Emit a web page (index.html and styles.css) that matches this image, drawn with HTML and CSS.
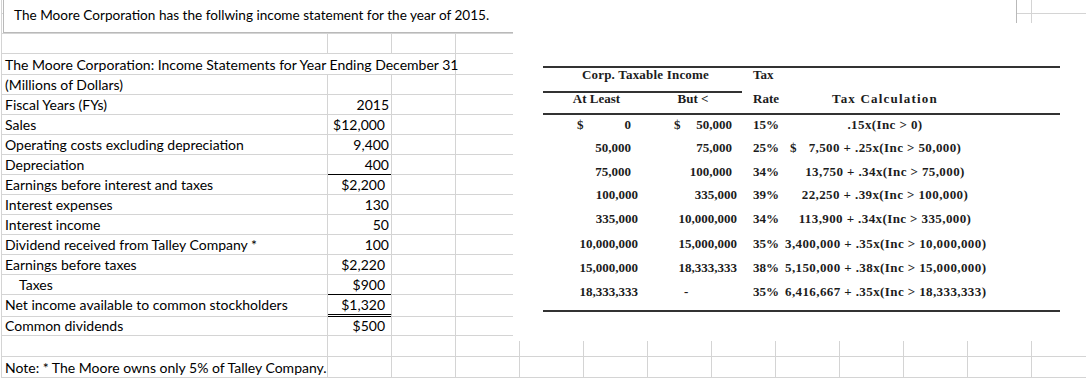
FILE: index.html
```html
<!DOCTYPE html>
<html>
<head>
<meta charset="utf-8">
<title>Income statement</title>
<link rel="stylesheet" href="styles.css">
</head>
<body>
<div class="sheet">
  <div class="grid">
    <div class="row row--short"><div class="c a"></div><div class="c b"></div><div class="c cc"></div><div class="rest"></div></div>
    <div class="row"><div class="c a"></div><div class="c b"></div><div class="c cc"></div><div class="rest"></div></div>
    <div class="row"><div class="c a"></div><div class="c b"></div><div class="c cc"></div><div class="rest"></div></div>
    <div class="row"><div class="c a a--wide">The Moore Corporation: Income Statements for Year Ending December 31</div><div class="rest"></div></div>
    <div class="row"><div class="c a">(Millions of Dollars)</div><div class="c b"></div><div class="c cc"></div><div class="rest"></div></div>
    <div class="row"><div class="c a">Fiscal Years (FYs)</div><div class="c b">2015</div><div class="c cc"></div><div class="rest"></div></div>
    <div class="row"><div class="c a">Sales</div><div class="c b b--acct">$12,000</div><div class="c cc"></div><div class="rest"></div></div>
    <div class="row"><div class="c a">Operating costs excluding depreciation</div><div class="c b">9,400</div><div class="c cc"></div><div class="rest"></div></div>
    <div class="row"><div class="c a">Depreciation</div><div class="c b b--rule">400</div><div class="c cc"></div><div class="rest"></div></div>
    <div class="row"><div class="c a">Earnings before interest and taxes</div><div class="c b b--acct">$2,200</div><div class="c cc"></div><div class="rest"></div></div>
    <div class="row"><div class="c a">Interest expenses</div><div class="c b">130</div><div class="c cc"></div><div class="rest"></div></div>
    <div class="row"><div class="c a">Interest income</div><div class="c b">50</div><div class="c cc"></div><div class="rest"></div></div>
    <div class="row"><div class="c a">Dividend received from Talley Company *</div><div class="c b">100</div><div class="c cc"></div><div class="rest"></div></div>
    <div class="row"><div class="c a">Earnings before taxes</div><div class="c b b--acct">$2,220</div><div class="c cc"></div><div class="rest"></div></div>
    <div class="row"><div class="c a a--indent">Taxes</div><div class="c b b--acct b--rule">$900</div><div class="c cc"></div><div class="rest"></div></div>
    <div class="row row--tall"><div class="c a">Net income available to common stockholders</div><div class="c b b--acct b--double">$1,320</div><div class="c cc"></div><div class="rest"></div></div>
    <div class="row row--tall"><div class="c a">Common dividends</div><div class="c b b--acct">$500</div><div class="c cc"></div><div class="rest"></div></div>
    <div class="row row--tall"><div class="c a"></div><div class="c b"></div><div class="c cc"></div><div class="rest"></div></div>
    <div class="row"><div class="c a">Note: * The Moore owns only 5% of Talley Company.</div><div class="c b"></div><div class="c cc"></div><div class="rest"></div></div>
    <div class="row"><div class="c a"></div><div class="c b"></div><div class="c cc"></div><div class="rest"></div></div>
  </div>

  <div class="textbox">The Moore Corporation has the follwing income statement for the year of 2015.</div>

  <div class="picture">
    <div class="tax">
      <div class="tax-head1">
        <div class="th th--group">Corp. Taxable Income</div>
        <div class="th th--rate">Tax</div>
      </div>
      <div class="tax-head2">
        <div class="th th--least">At Least</div>
        <div class="th th--but">But &lt;</div>
        <div class="th th--rate">Rate</div>
        <div class="th th--calc">Tax Calculation</div>
      </div>
      <div class="tax-body">
        <div class="tr tr--1">
          <div class="td least"><span class="cur">$</span><span>0</span></div>
          <div class="td but"><span class="cur">$</span><span>50,000</span></div>
          <div class="td rate">15%</div>
          <div class="td calc"><span class="f">.15x(Inc &gt; 0)</span></div>
        </div>
        <div class="tr tr--2">
          <div class="td least"><span>50,000</span></div>
          <div class="td but"><span>75,000</span></div>
          <div class="td rate">25%</div>
          <div class="td calc"><span class="cur">$</span><span class="f">7,500 + .25x(Inc &gt; 50,000)</span></div>
        </div>
        <div class="tr tr--3">
          <div class="td least"><span>75,000</span></div>
          <div class="td but"><span>100,000</span></div>
          <div class="td rate">34%</div>
          <div class="td calc"><span class="f">13,750 + .34x(Inc &gt; 75,000)</span></div>
        </div>
        <div class="tr tr--4 tr--wide">
          <div class="td least"><span>100,000</span></div>
          <div class="td but"><span>335,000</span></div>
          <div class="td rate">39%</div>
          <div class="td calc"><span class="f">22,250 + .39x(Inc &gt; 100,000)</span></div>
        </div>
        <div class="tr tr--5 tr--wide">
          <div class="td least"><span>335,000</span></div>
          <div class="td but"><span>10,000,000</span></div>
          <div class="td rate">34%</div>
          <div class="td calc"><span class="f">113,900 + .34x(Inc &gt; 335,000)</span></div>
        </div>
        <div class="tr tr--6 tr--wide">
          <div class="td least"><span>10,000,000</span></div>
          <div class="td but"><span>15,000,000</span></div>
          <div class="td rate">35%</div>
          <div class="td calc"><span class="f">3,400,000 + .35x(Inc &gt; 10,000,000)</span></div>
        </div>
        <div class="tr tr--7 tr--wide">
          <div class="td least"><span>15,000,000</span></div>
          <div class="td but"><span>18,333,333</span></div>
          <div class="td rate">38%</div>
          <div class="td calc"><span class="f">5,150,000 + .38x(Inc &gt; 15,000,000)</span></div>
        </div>
        <div class="tr tr--8 tr--wide">
          <div class="td least"><span>18,333,333</span></div>
          <div class="td but but--dash"><span>-</span></div>
          <div class="td rate">35%</div>
          <div class="td calc"><span class="f">6,416,667 + .35x(Inc &gt; 18,333,333)</span></div>
        </div>
      </div>
    </div>
  </div>
</div>
</body>
</html>
```

FILE: styles.css
```css
* { box-sizing: border-box; }

html, body {
  margin: 0;
  padding: 0;
  background: #ffffff;
}

.sheet {
  position: relative;
  width: 1086px;
  height: 378px;
  overflow: hidden;
  padding-left: 1px;
  font-family: "Lato", "Liberation Sans", sans-serif;
  font-size: 14px;
  color: #000;
}

.grid {
  border-left: 1px solid #d4d4d4;
}

.row {
  display: grid;
  grid-template-columns: 326px 64px 64px 1fr;
  height: 20px;
}

.row--short { height: 14px; }
.row--tall { height: 21px; }

.c {
  border-right: 1px solid #d4d4d4;
  border-bottom: 1px solid #d4d4d4;
  line-height: 19px;
  padding-top: 1px;
  white-space: nowrap;
  overflow: visible;
}

.a { padding-left: 3px; }
.a--wide { grid-column: 1 / 4; }
.a--indent { padding-left: 17px; }

.b {
  text-align: right;
  padding-right: 2px;
}

.b--acct { padding-right: 6px; }
.b--rule { border-bottom-color: #000; }
.b--double { border-bottom: 3px double #000; }

.rest {
  border-bottom: 1px solid #d4d4d4;
  background: repeating-linear-gradient(to right, transparent 0, transparent 63px, #d4d4d4 63px, #d4d4d4 64px);
}

.textbox {
  position: absolute;
  left: 3px;
  top: -2px;
  width: 1014px;
  height: 35px;
  border: 1px solid #b9b9b9;
  background: #fff;
  padding: 6px 0 0 10px;
  font-size: 13.6px;
  line-height: 20px;
  white-space: nowrap;
}

.picture {
  position: absolute;
  left: 513px;
  top: 23px;
  width: 573px;
  height: 318px;
  background: #fff;
}

.tax {
  margin: 43px 0 0 30px;
  width: 517px;
  font-family: "Liberation Serif", "Times New Roman", serif;
  font-weight: bold;
  font-size: 13px;
  color: #1c1c1c;
  border-top: 2px solid #333;
}

.tax-head1,
.tax-head2,
.tr {
  display: grid;
  grid-template-columns: 97px 102px 43px 200px 75px;
}

.tax-head1 {
  height: 25px;
}

.th {
  white-space: nowrap;
}

.tax-head1 .th {
  line-height: 14px;
}

.th--group {
  grid-column: 1 / 3;
  text-align: center;
  padding-left: 6px;
  letter-spacing: 0.2px;
  border-bottom: 2px solid #333;
}

.th--rate { padding-left: 11px; }

.tax-head2 {
  height: 22px;
  border-bottom: 2px solid #333;
}

.tax-head2 .th {
  line-height: 12px;
}

.th--least { text-align: center; padding-left: 10px; }
.th--but { text-align: center; padding-left: 4px; }
.th--calc { text-align: center; letter-spacing: 1.2px; }

.tax-body {
  border-bottom: 2px solid #333;
}

.tr {
  line-height: 20px;
  white-space: nowrap;
}

.tr--1 { height: 23px; }
.tr--2 { height: 24px; }
.tr--3 { height: 23px; }
.tr--4 { height: 24px; }
.tr--5 { height: 25px; }
.tr--6 { height: 24px; }
.tr--7 { height: 24px; }
.tr--8 { height: 28px; }

.td {
  display: flex;
  justify-content: flex-end;
  align-items: flex-start;
}

.least { padding: 0 9px 0 34px; }
.but { padding: 0 10px 0 34px; }

.tr--wide .least { padding-right: 2px; }
.tr--wide .but { padding-right: 5px; }

.cur { margin-right: auto; }

.but--dash {
  justify-content: flex-start;
  padding-left: 44px;
}

.rate {
  justify-content: flex-start;
  padding-left: 11px;
}

.calc {
  display: grid;
  grid-template-columns: 1fr;
  justify-content: stretch;
}

.calc > span {
  grid-area: 1 / 1;
}

.calc .cur {
  justify-self: start;
  margin: 0 0 0 5px;
}

.calc .f {
  justify-self: center;
  letter-spacing: 0.4px;
}
```
